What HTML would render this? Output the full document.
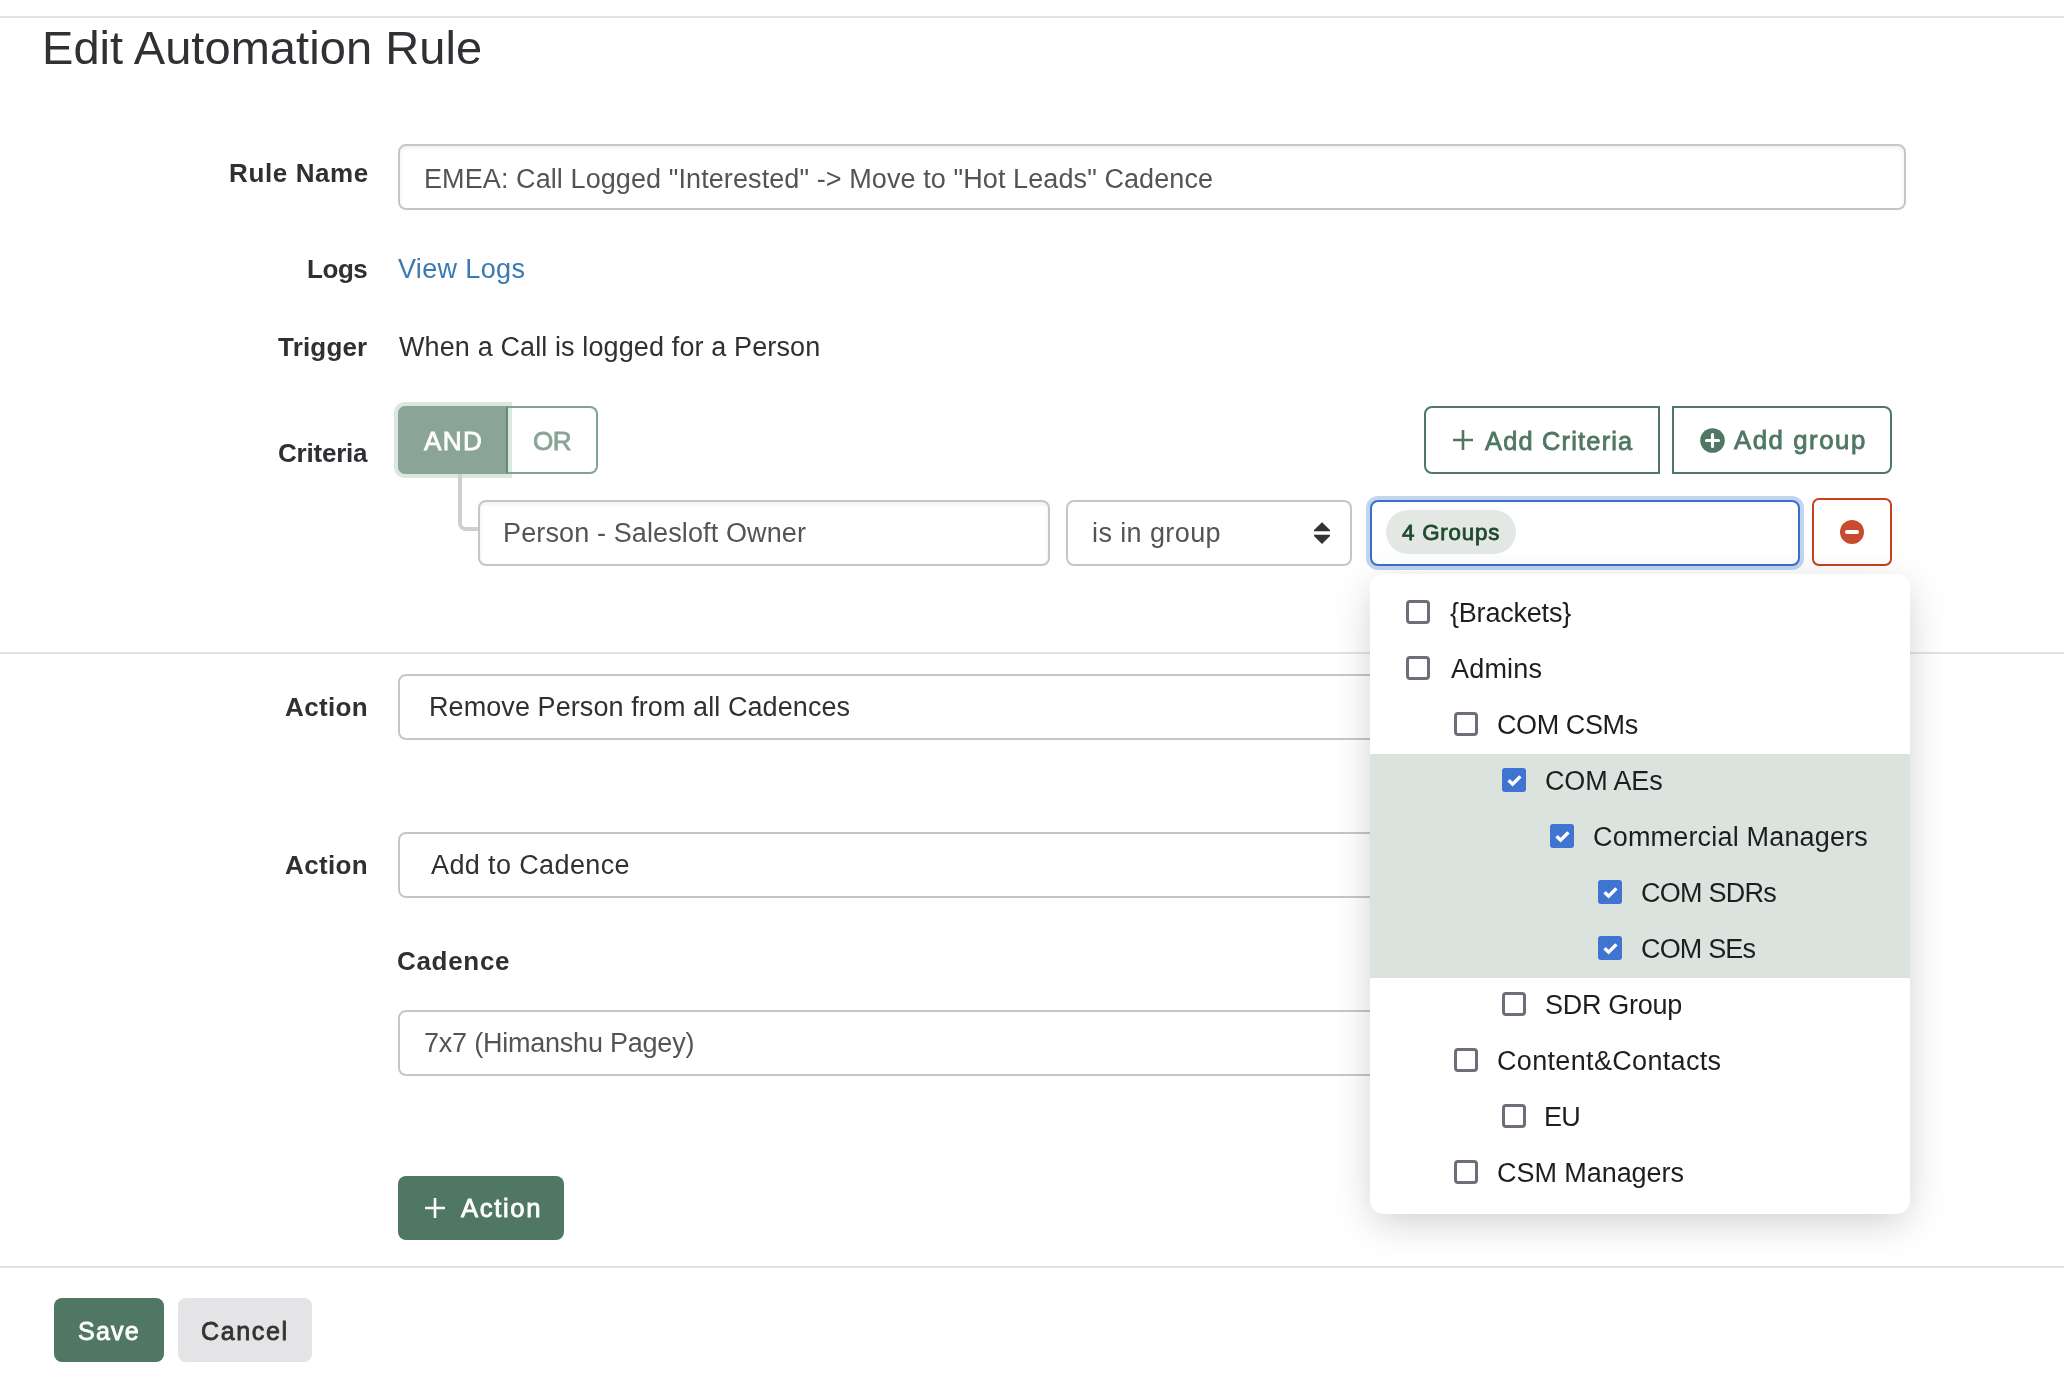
<!DOCTYPE html>
<html><head><meta charset="utf-8">
<style>
html,body{margin:0;padding:0;background:#fff;width:2064px;height:1376px;overflow:hidden;position:relative;font-family:"Liberation Sans",sans-serif;}
.t{position:absolute;white-space:nowrap;will-change:transform;}
.b{position:absolute;box-sizing:border-box;}
svg{position:absolute;overflow:visible;}
</style></head><body>
<div class="b" style="left:0px;top:16px;width:2064px;height:2px;background:#e3e3e5;"></div>
<div class="t" style="left:41.74px;top:24.21px;font-size:47px;line-height:47px;color:#2f3135;font-weight:400;letter-spacing:0.058px;">Edit Automation Rule</div>
<div class="t" style="left:228.51px;top:159.59px;font-size:26px;line-height:26px;color:#2e3034;font-weight:700;letter-spacing:0.614px;">Rule Name</div>
<div class="t" style="left:307.01px;top:255.99px;font-size:26px;line-height:26px;color:#2e3034;font-weight:700;letter-spacing:-0.437px;">Logs</div>
<div class="t" style="left:277.94px;top:334.29px;font-size:26px;line-height:26px;color:#2e3034;font-weight:700;letter-spacing:0.185px;">Trigger</div>
<div class="t" style="left:277.76px;top:440.19px;font-size:26px;line-height:26px;color:#2e3034;font-weight:700;letter-spacing:-0.217px;">Criteria</div>
<div class="t" style="left:285.35px;top:693.99px;font-size:26px;line-height:26px;color:#2e3034;font-weight:700;letter-spacing:0.350px;">Action</div>
<div class="t" style="left:285.35px;top:851.99px;font-size:26px;line-height:26px;color:#2e3034;font-weight:700;letter-spacing:0.350px;">Action</div>
<div class="b" style="left:398px;top:144px;width:1508px;height:66px;border:2px solid #c6c6c6;border-radius:8px;box-shadow:inset 0 2px 4px rgba(0,0,0,0.07);background:#fff;"></div>
<div class="t" style="left:423.54px;top:166.14px;font-size:27px;line-height:27px;color:#545454;font-weight:400;letter-spacing:0.092px;">EMEA: Call Logged "Interested" -&gt; Move to "Hot Leads" Cadence</div>
<div class="t" style="left:397.87px;top:256.14px;font-size:27px;line-height:27px;color:#3a7ab3;font-weight:400;letter-spacing:0.352px;">View Logs</div>
<div class="t" style="left:398.67px;top:334.44px;font-size:27px;line-height:27px;color:#2e3034;font-weight:400;letter-spacing:0.119px;">When a Call is logged for a Person</div>
<div class="b" style="left:394px;top:402px;width:118px;height:76px;background:#dde6e1;border-radius:10px 0 0 10px;"></div>
<div class="b" style="left:398px;top:406px;width:110px;height:68px;background:#8aa597;border-radius:7px 0 0 7px;"></div>
<div class="b" style="left:506px;top:406px;width:92px;height:68px;border:2px solid #82a292;border-left:2px solid #628a76;border-radius:0 8px 8px 0;"></div>
<div class="t" style="left:424.40px;top:428.41px;font-size:26.1px;line-height:26.1px;color:#fff;font-weight:400;letter-spacing:1.402px;-webkit-text-stroke:0.8px #fff;">AND</div>
<div class="t" style="left:532.73px;top:428.41px;font-size:26.1px;line-height:26.1px;color:#8aa597;font-weight:400;letter-spacing:-0.601px;-webkit-text-stroke:0.8px #8aa597;">OR</div>
<div class="b" style="left:458px;top:474px;width:32px;height:57px;border-left:4px solid #cfcfcf;border-bottom:4px solid #cfcfcf;border-radius:0 0 0 8px;"></div>
<div class="b" style="left:478px;top:500px;width:572px;height:66px;border:2px solid #c6c6c6;border-radius:8px;box-shadow:inset 0 2px 4px rgba(0,0,0,0.07);background:#fff;"></div>
<div class="t" style="left:503.44px;top:520.14px;font-size:27px;line-height:27px;color:#545454;font-weight:400;letter-spacing:0.124px;">Person - Salesloft Owner</div>
<div class="b" style="left:1066px;top:500px;width:286px;height:66px;border:2px solid #c5c6ca;border-radius:8px;background:#fff;"></div>
<div class="t" style="left:1091.84px;top:520.14px;font-size:27px;line-height:27px;color:#545454;font-weight:400;letter-spacing:0.403px;">is in group</div>
<svg style="left:1313px;top:521px" width="18" height="24" viewBox="0 0 18 24"><path d="M9 1.2 L17 9 L17 10.2 L1 10.2 L1 9 Z M1 13.8 L17 13.8 L17 15 L9 23 L1 15 Z" fill="#333"/></svg>
<div class="b" style="left:1366px;top:496px;width:438px;height:74px;background:#c3d4ee;border-radius:12px;"></div>
<div class="b" style="left:1370px;top:500px;width:430px;height:66px;border:2px solid #3670cc;border-radius:8px;background:#fff;"></div>
<div class="b" style="left:1386px;top:510px;width:130px;height:44px;background:#e3e8e5;border-radius:22px;"></div>
<div class="t" style="left:1401.85px;top:521.52px;font-size:22.3px;line-height:22.3px;color:#1f4a2d;font-weight:400;letter-spacing:0.795px;-webkit-text-stroke:0.8px #1f4a2d;">4 Groups</div>
<div class="b" style="left:1812px;top:498px;width:80px;height:68px;border:2px solid #c6421f;border-radius:7px;"></div>
<svg style="left:1840px;top:520px" width="24" height="24" viewBox="0 0 24 24"><circle cx="12" cy="12" r="12" fill="#c84b2f"/><rect x="5" y="10" width="14" height="4" rx="2" fill="#fff"/></svg>
<div class="b" style="left:1424px;top:406px;width:236px;height:68px;border:2px solid #4f7764;border-radius:8px 0 0 8px;"></div>
<svg style="left:1452px;top:429px" width="22" height="22" viewBox="0 0 22 22"><path d="M11 1 V21 M1 11 H21" stroke="#4f7764" stroke-width="2.6"/></svg>
<div class="t" style="left:1485.10px;top:428.70px;font-size:25.4px;line-height:25.4px;color:#4f7764;font-weight:400;letter-spacing:1.199px;-webkit-text-stroke:0.8px #4f7764;">Add Criteria</div>
<div class="b" style="left:1672px;top:406px;width:220px;height:68px;border:2px solid #4f7764;border-radius:0 8px 8px 0;"></div>
<svg style="left:1700px;top:428px" width="25" height="25" viewBox="0 0 25 25"><circle cx="12.5" cy="12.5" r="12.3" fill="#4f7764"/><path d="M12.5 6.5 V18.5 M6.5 12.5 H18.5" stroke="#fff" stroke-width="3.2" stroke-linecap="round"/></svg>
<div class="t" style="left:1734.30px;top:428.36px;font-size:25.8px;line-height:25.8px;color:#4f7764;font-weight:400;letter-spacing:1.533px;-webkit-text-stroke:0.8px #4f7764;">Add group</div>
<div class="b" style="left:0px;top:652px;width:2064px;height:2px;background:#e3e3e5;"></div>
<div class="b" style="left:398px;top:674px;width:1508px;height:66px;border:2px solid #c5c6ca;border-radius:8px;background:#fff;"></div>
<div class="t" style="left:429.44px;top:694.14px;font-size:27px;line-height:27px;color:#2e3034;font-weight:400;letter-spacing:0.079px;">Remove Person from all Cadences</div>
<div class="b" style="left:398px;top:832px;width:1508px;height:66px;border:2px solid #c5c6ca;border-radius:8px;background:#fff;"></div>
<div class="t" style="left:430.90px;top:852.14px;font-size:27px;line-height:27px;color:#2e3034;font-weight:400;letter-spacing:0.379px;">Add to Cadence</div>
<div class="t" style="left:397.46px;top:948.09px;font-size:26px;line-height:26px;color:#2e3034;font-weight:700;letter-spacing:0.693px;">Cadence</div>
<div class="b" style="left:398px;top:1010px;width:1508px;height:66px;border:2px solid #c5c6ca;border-radius:8px;background:#fff;"></div>
<div class="t" style="left:423.65px;top:1029.64px;font-size:27px;line-height:27px;color:#545454;font-weight:400;letter-spacing:-0.222px;">7x7 (Himanshu Pagey)</div>
<div class="b" style="left:398px;top:1176px;width:166px;height:64px;background:#4f7764;border-radius:8px;"></div>
<svg style="left:424px;top:1197px" width="22" height="22" viewBox="0 0 22 22"><path d="M11 1 V21 M1 11 H21" stroke="#fff" stroke-width="2.6"/></svg>
<div class="t" style="left:460.60px;top:1196.44px;font-size:25.7px;line-height:25.7px;color:#fff;font-weight:400;letter-spacing:1.605px;-webkit-text-stroke:0.8px #fff;">Action</div>
<div class="b" style="left:0px;top:1266px;width:2064px;height:2px;background:#e3e3e5;"></div>
<div class="b" style="left:54px;top:1298px;width:110px;height:64px;background:#4f7764;border-radius:8px;"></div>
<div class="t" style="left:78.27px;top:1318.65px;font-size:25.1px;line-height:25.1px;color:#fff;font-weight:400;letter-spacing:1.210px;-webkit-text-stroke:0.8px #fff;">Save</div>
<div class="b" style="left:178px;top:1298px;width:134px;height:64px;background:#e4e4e6;border-radius:8px;"></div>
<div class="t" style="left:201.45px;top:1318.65px;font-size:25.1px;line-height:25.1px;color:#333;font-weight:400;letter-spacing:1.585px;-webkit-text-stroke:0.8px #333;">Cancel</div>
<div class="b" style="left:1370px;top:574px;width:540px;height:640px;background:#fff;border-radius:14px;box-shadow:0 10px 40px -4px rgba(0,0,0,0.21);overflow:hidden;"></div>
<div class="b" style="left:1370px;top:754px;width:540px;height:224px;background:#dae3de;"></div>
<svg style="left:1406px;top:600px" width="24" height="24" viewBox="0 0 24 24"><rect x="1.5" y="1.5" width="21" height="21" rx="2.5" fill="none" stroke="#6b6f79" stroke-width="3"/></svg>
<div class="t" style="left:1450.10px;top:599.64px;font-size:27px;line-height:27px;color:#1e1e1e;font-weight:400;letter-spacing:-0.208px;">{Brackets}</div>
<svg style="left:1406px;top:656px" width="24" height="24" viewBox="0 0 24 24"><rect x="1.5" y="1.5" width="21" height="21" rx="2.5" fill="none" stroke="#6b6f79" stroke-width="3"/></svg>
<div class="t" style="left:1450.50px;top:655.64px;font-size:27px;line-height:27px;color:#1e1e1e;font-weight:400;letter-spacing:0.200px;">Admins</div>
<svg style="left:1454px;top:712px" width="24" height="24" viewBox="0 0 24 24"><rect x="1.5" y="1.5" width="21" height="21" rx="2.5" fill="none" stroke="#6b6f79" stroke-width="3"/></svg>
<div class="t" style="left:1497.15px;top:711.64px;font-size:27px;line-height:27px;color:#1e1e1e;font-weight:400;letter-spacing:-0.407px;">COM CSMs</div>
<svg style="left:1502px;top:768px" width="24" height="24" viewBox="0 0 24 24"><rect x="0" y="0" width="24" height="24" rx="3" fill="#3f75d1"/><path d="M6.6 12.2 L10.6 16.2 L18.4 8.4" stroke="#fff" stroke-width="3.4" fill="none" stroke-linecap="butt" stroke-linejoin="miter"/></svg>
<div class="t" style="left:1545.15px;top:767.64px;font-size:27px;line-height:27px;color:#1e1e1e;font-weight:400;letter-spacing:-0.139px;">COM AEs</div>
<svg style="left:1550px;top:824px" width="24" height="24" viewBox="0 0 24 24"><rect x="0" y="0" width="24" height="24" rx="3" fill="#3f75d1"/><path d="M6.6 12.2 L10.6 16.2 L18.4 8.4" stroke="#fff" stroke-width="3.4" fill="none" stroke-linecap="butt" stroke-linejoin="miter"/></svg>
<div class="t" style="left:1593.15px;top:823.64px;font-size:27px;line-height:27px;color:#1e1e1e;font-weight:400;letter-spacing:0.182px;">Commercial Managers</div>
<svg style="left:1598px;top:880px" width="24" height="24" viewBox="0 0 24 24"><rect x="0" y="0" width="24" height="24" rx="3" fill="#3f75d1"/><path d="M6.6 12.2 L10.6 16.2 L18.4 8.4" stroke="#fff" stroke-width="3.4" fill="none" stroke-linecap="butt" stroke-linejoin="miter"/></svg>
<div class="t" style="left:1641.15px;top:879.64px;font-size:27px;line-height:27px;color:#1e1e1e;font-weight:400;letter-spacing:-0.735px;">COM SDRs</div>
<svg style="left:1598px;top:936px" width="24" height="24" viewBox="0 0 24 24"><rect x="0" y="0" width="24" height="24" rx="3" fill="#3f75d1"/><path d="M6.6 12.2 L10.6 16.2 L18.4 8.4" stroke="#fff" stroke-width="3.4" fill="none" stroke-linecap="butt" stroke-linejoin="miter"/></svg>
<div class="t" style="left:1641.15px;top:935.64px;font-size:27px;line-height:27px;color:#1e1e1e;font-weight:400;letter-spacing:-0.837px;">COM SEs</div>
<svg style="left:1502px;top:992px" width="24" height="24" viewBox="0 0 24 24"><rect x="1.5" y="1.5" width="21" height="21" rx="2.5" fill="none" stroke="#6b6f79" stroke-width="3"/></svg>
<div class="t" style="left:1545.29px;top:991.64px;font-size:27px;line-height:27px;color:#1e1e1e;font-weight:400;letter-spacing:-0.295px;">SDR Group</div>
<svg style="left:1454px;top:1048px" width="24" height="24" viewBox="0 0 24 24"><rect x="1.5" y="1.5" width="21" height="21" rx="2.5" fill="none" stroke="#6b6f79" stroke-width="3"/></svg>
<div class="t" style="left:1497.15px;top:1047.64px;font-size:27px;line-height:27px;color:#1e1e1e;font-weight:400;letter-spacing:0.333px;">Content&amp;Contacts</div>
<svg style="left:1502px;top:1104px" width="24" height="24" viewBox="0 0 24 24"><rect x="1.5" y="1.5" width="21" height="21" rx="2.5" fill="none" stroke="#6b6f79" stroke-width="3"/></svg>
<div class="t" style="left:1544.34px;top:1103.64px;font-size:27px;line-height:27px;color:#1e1e1e;font-weight:400;letter-spacing:-0.810px;">EU</div>
<svg style="left:1454px;top:1160px" width="24" height="24" viewBox="0 0 24 24"><rect x="1.5" y="1.5" width="21" height="21" rx="2.5" fill="none" stroke="#6b6f79" stroke-width="3"/></svg>
<div class="t" style="left:1497.15px;top:1159.64px;font-size:27px;line-height:27px;color:#1e1e1e;font-weight:400;letter-spacing:-0.056px;">CSM Managers</div>
</body></html>
